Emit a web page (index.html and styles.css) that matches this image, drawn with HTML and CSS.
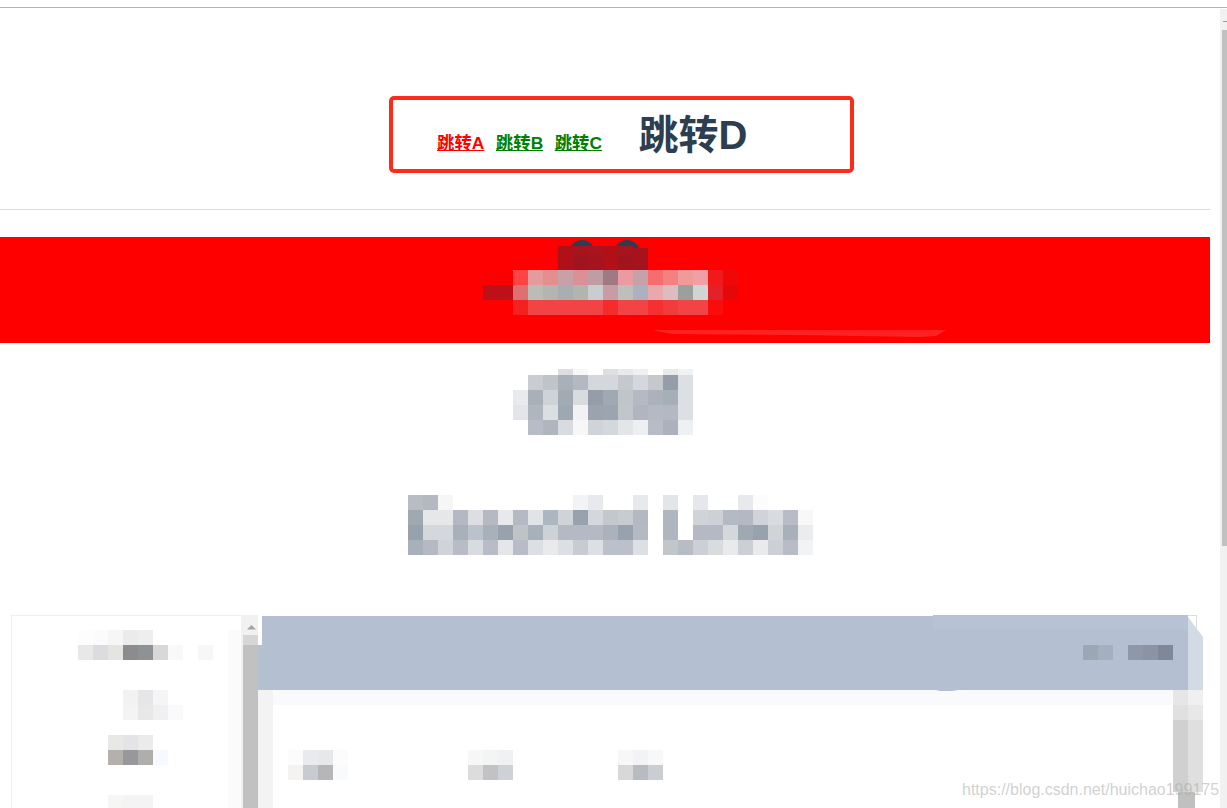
FILE: index.html
```html
<!DOCTYPE html>
<html lang="zh">
<head>
<meta charset="utf-8">
<title>跳转</title>
<link rel="stylesheet" href="styles.css">
</head>
<body>
<div class="topline"></div>
<header class="masthead">
  <nav class="jump-box">
    <a class="jump jump-red" href="#a">跳转A</a>
    <a class="jump jump-green" href="#b">跳转B</a>
    <a class="jump jump-green" href="#c">跳转C</a>
    <span class="jump-big">跳转D</span>
  </nav>
</header>
<hr class="rule">
<svg class="hero mosaic" viewBox="0 237 1210 106" width="1210" height="106">
  <rect class="full" x="0" y="237" fill="#ff0000" style="width:1210px;height:106px"/>
  <circle cx="582" cy="253" r="13" fill="#2c3e50"/><circle cx="627" cy="253" r="13" fill="#2c3e50"/>
  <rect x="0" y="266" fill="#ff0000" style="width:1210px;height:64px"/>
  <rect x="558" y="246" fill="#b01018" style="width:15px;height:24px"/>
  <rect x="573" y="246" fill="#a8141e" style="width:15px;height:9px"/><rect x="573" y="255" fill="#9e1520" style="width:15px;height:15px"/>
  <rect x="588" y="246" fill="#aa141e" style="width:15px;height:9px"/><rect x="588" y="255" fill="#a5141e" style="width:15px;height:15px"/>
  <rect x="603" y="246" fill="#b01016" style="width:15px;height:24px"/>
  <rect x="618" y="246" fill="#a8141e" style="width:15px;height:9px"/><rect x="618" y="255" fill="#a0141e" style="width:15px;height:15px"/>
  <rect x="633" y="248" fill="#a5141c" style="width:15px;height:22px"/>
  <rect x="483" y="270" fill="#fc0000"/><rect x="498" y="270" fill="#fc0000"/><rect x="513" y="270" fill="#ff4444"/><rect x="528" y="270" fill="#e59a9c"/><rect x="543" y="270" fill="#e48e8e"/><rect x="558" y="270" fill="#c8a0a8"/><rect x="573" y="270" fill="#dd8f96"/><rect x="588" y="270" fill="#bf9da4"/><rect x="603" y="270" fill="#9e7a82"/><rect x="618" y="270" fill="#ea9aa0"/><rect x="633" y="270" fill="#c4a2a8"/><rect x="648" y="270" fill="#f56d6d"/><rect x="663" y="270" fill="#f58080"/><rect x="678" y="270" fill="#f09a9a"/><rect x="693" y="270" fill="#f0a0a4"/><rect x="708" y="270" fill="#f01a1a"/><rect x="723" y="270" fill="#f00808"/>
  <rect x="483" y="285" fill="#be1018"/><rect x="498" y="285" fill="#be1018"/><rect x="513" y="285" fill="#e07070"/><rect x="528" y="285" fill="#bcbcb6"/><rect x="543" y="285" fill="#b4b4b0"/><rect x="558" y="285" fill="#a9aeb0"/><rect x="573" y="285" fill="#b2b4ae"/><rect x="588" y="285" fill="#cacdd0"/><rect x="603" y="285" fill="#c89ca4"/><rect x="618" y="285" fill="#bebfbb"/><rect x="633" y="285" fill="#aeb0c0"/><rect x="648" y="285" fill="#e8a8ac"/><rect x="663" y="285" fill="#dcbcbe"/><rect x="678" y="285" fill="#9ca09c"/><rect x="693" y="285" fill="#d0d4d2"/><rect x="708" y="285" fill="#e42028"/><rect x="723" y="285" fill="#e60808"/>
  <rect x="513" y="300" fill="#f52020"/><rect x="528" y="300" fill="#f24444"/><rect x="543" y="300" fill="#f24444"/><rect x="558" y="300" fill="#f24444"/><rect x="573" y="300" fill="#f24444"/><rect x="588" y="300" fill="#f24444"/><rect x="603" y="300" fill="#f52c2c"/><rect x="618" y="300" fill="#f24444"/><rect x="633" y="300" fill="#f24444"/><rect x="648" y="300" fill="#f53030"/><rect x="663" y="300" fill="#f23c3c"/><rect x="678" y="300" fill="#f24444"/><rect x="693" y="300" fill="#f24444"/><rect x="708" y="300" fill="#f80c0c"/>
  <polygon points="653,330 946,330 936,336 920,337 800,335 672,334" fill="#ff2222"/>
</svg>
<svg class="titles mosaic" viewBox="0 343 1210 272" width="1210" height="272">
  <rect x="558" y="369" fill="#dcdde2" style="height:6px"/><rect x="573" y="369" fill="#f7f7f7" style="height:6px"/><rect x="603" y="369" fill="#dcdfe4" style="height:6px"/><rect x="618" y="369" fill="#e8e9ed" style="height:6px"/><rect x="633" y="369" fill="#eeeff2" style="height:6px"/><rect x="663" y="369" fill="#e8e9ed" style="height:6px"/><rect x="678" y="369" fill="#f0f1f3" style="height:6px"/>
  <rect x="528" y="375" fill="#c9ccd0"/><rect x="543" y="375" fill="#bfc4c8"/><rect x="558" y="375" fill="#a8b0b8"/><rect x="573" y="375" fill="#b4b8c2"/><rect x="588" y="375" fill="#d4d7dc"/><rect x="603" y="375" fill="#d4d7dc"/><rect x="618" y="375" fill="#c5c9ce"/><rect x="633" y="375" fill="#d4d7dd"/><rect x="648" y="375" fill="#c5c9ce"/><rect x="663" y="375" fill="#959ea8"/><rect x="678" y="375" fill="#dcdfe3"/>
  <rect x="513" y="390" fill="#e9eaec"/><rect x="528" y="390" fill="#a8b0b8"/><rect x="543" y="390" fill="#cfd3d7"/><rect x="558" y="390" fill="#a2abb4"/><rect x="573" y="390" fill="#d8dcdf"/><rect x="588" y="390" fill="#949da8"/><rect x="603" y="390" fill="#a0a8b2"/><rect x="618" y="390" fill="#c0c5ca"/><rect x="633" y="390" fill="#b4b9c3"/><rect x="648" y="390" fill="#acb2bc"/><rect x="663" y="390" fill="#a6aeb8"/><rect x="678" y="390" fill="#dce0e4"/>
  <rect x="513" y="405" fill="#e3e5e8"/><rect x="528" y="405" fill="#b0b6be"/><rect x="543" y="405" fill="#dcdfe2"/><rect x="558" y="405" fill="#9ea8b2"/><rect x="573" y="405" fill="#f2f2f4"/><rect x="588" y="405" fill="#9aa3ae"/><rect x="603" y="405" fill="#9ca4af"/><rect x="618" y="405" fill="#c2c6cb"/><rect x="633" y="405" fill="#b0b5bf"/><rect x="648" y="405" fill="#b4b9c3"/><rect x="663" y="405" fill="#b4b8c2"/><rect x="678" y="405" fill="#dcdfe3"/>
  <rect x="528" y="420" fill="#b8bcc6"/><rect x="543" y="420" fill="#b0b6be"/><rect x="558" y="420" fill="#d8dbdf"/><rect x="573" y="420" fill="#f7f7f7"/><rect x="588" y="420" fill="#d0d3d8"/><rect x="603" y="420" fill="#d4d7dc"/><rect x="618" y="420" fill="#e4e5e9"/><rect x="633" y="420" fill="#eeeff2"/><rect x="648" y="420" fill="#b8bcc6"/><rect x="663" y="420" fill="#acb2bc"/><rect x="678" y="420" fill="#eff0f2"/>
  <rect x="408" y="495" fill="#b8bcc4"/><rect x="423" y="495" fill="#b4b8c0"/><rect x="438" y="495" fill="#f6f6f6"/><rect x="573" y="495" fill="#f2f3f5"/><rect x="588" y="495" fill="#e8e9ec"/><rect x="633" y="495" fill="#e8e9ec"/><rect x="663" y="495" fill="#e4e5e9"/><rect x="693" y="495" fill="#e6e7ea"/><rect x="738" y="495" fill="#e8e9ec"/><rect x="753" y="495" fill="#fcfcfc"/>
  <rect x="408" y="510" fill="#a0a8b0"/><rect x="423" y="510" fill="#e6e7e9"/><rect x="438" y="510" fill="#e6e7e9"/><rect x="453" y="510" fill="#b4b8c2"/><rect x="468" y="510" fill="#dcdee2"/><rect x="483" y="510" fill="#b4b9c2"/><rect x="498" y="510" fill="#e8e9eb"/><rect x="513" y="510" fill="#b4b9c3"/><rect x="528" y="510" fill="#e0e4e6"/><rect x="543" y="510" fill="#acb6c0"/><rect x="558" y="510" fill="#d0d4d8"/><rect x="573" y="510" fill="#98a2ae"/><rect x="588" y="510" fill="#d4d8dc"/><rect x="603" y="510" fill="#c4c8cc"/><rect x="618" y="510" fill="#c8cccf"/><rect x="633" y="510" fill="#b4b8c2"/><rect x="663" y="510" fill="#b0b6c0"/><rect x="693" y="510" fill="#d0d4d8"/><rect x="708" y="510" fill="#cdd0d4"/><rect x="723" y="510" fill="#b4bac4"/><rect x="738" y="510" fill="#b4b8c2"/><rect x="753" y="510" fill="#d0d4da"/><rect x="768" y="510" fill="#d8dbdf"/><rect x="783" y="510" fill="#b8bcc6"/><rect x="798" y="510" fill="#f8f8f8"/>
  <rect x="408" y="525" fill="#98a2ae"/><rect x="423" y="525" fill="#d4d7dc"/><rect x="438" y="525" fill="#d4d7dc"/><rect x="453" y="525" fill="#a8b0ba"/><rect x="468" y="525" fill="#bcc2cc"/><rect x="483" y="525" fill="#a8b0ba"/><rect x="498" y="525" fill="#98a2ae"/><rect x="513" y="525" fill="#bcc4c6"/><rect x="528" y="525" fill="#a8b0ba"/><rect x="543" y="525" fill="#ccd2d6"/><rect x="558" y="525" fill="#b4b9c3"/><rect x="573" y="525" fill="#b4b9c3"/><rect x="588" y="525" fill="#b4b9c3"/><rect x="603" y="525" fill="#acb2bc"/><rect x="618" y="525" fill="#98a2ae"/><rect x="633" y="525" fill="#b4b9c3"/><rect x="663" y="525" fill="#b0b6c0"/><rect x="693" y="525" fill="#b4b9c3"/><rect x="708" y="525" fill="#b4b9c3"/><rect x="723" y="525" fill="#d4d8da"/><rect x="738" y="525" fill="#a0a8b2"/><rect x="753" y="525" fill="#98a2ae"/><rect x="768" y="525" fill="#d0d4d6"/><rect x="783" y="525" fill="#a8b0ba"/><rect x="798" y="525" fill="#ebecee"/>
  <rect x="408" y="540" fill="#a8b0ba"/><rect x="423" y="540" fill="#b4b9c2"/><rect x="438" y="540" fill="#d0d4d8"/><rect x="453" y="540" fill="#b8bcc6"/><rect x="468" y="540" fill="#d8dcde"/><rect x="483" y="540" fill="#b8bcc6"/><rect x="498" y="540" fill="#e4e6e9"/><rect x="513" y="540" fill="#b8bcc6"/><rect x="528" y="540" fill="#dce0e4"/><rect x="543" y="540" fill="#e8eaec"/><rect x="558" y="540" fill="#dce0e4"/><rect x="573" y="540" fill="#c8ccd0"/><rect x="588" y="540" fill="#dce0e4"/><rect x="603" y="540" fill="#bcc0ca"/><rect x="618" y="540" fill="#bcc0ca"/><rect x="633" y="540" fill="#dce0e4"/><rect x="663" y="540" fill="#c0c6ca"/><rect x="678" y="540" fill="#b8bcc4"/><rect x="693" y="540" fill="#ccd0d6"/><rect x="708" y="540" fill="#d8dcdf"/><rect x="723" y="540" fill="#e8eaec"/><rect x="738" y="540" fill="#ccd0d6"/><rect x="753" y="540" fill="#e8eaec"/><rect x="768" y="540" fill="#ccd0d6"/><rect x="783" y="540" fill="#b8bcc6"/><rect x="798" y="540" fill="#f2f3f5"/>
</svg>
<section class="panel">
  <aside class="sidebar">
    <svg class="mosaic" viewBox="12 616 229 192" width="229" height="192">
      <rect x="78" y="630" fill="#fdfdfd"/><rect x="93" y="630" fill="#fbfbfb"/><rect x="108" y="630" fill="#f6f6f6"/><rect x="123" y="630" fill="#ebebeb"/><rect x="138" y="630" fill="#eeeeee"/>
      <rect x="78" y="645" fill="#e8e8e8"/><rect x="93" y="645" fill="#dcdce0"/><rect x="108" y="645" fill="#e4e4e0"/><rect x="123" y="645" fill="#8c8c8e"/><rect x="138" y="645" fill="#8f9294"/><rect x="153" y="645" fill="#d8d8d8"/><rect x="168" y="645" fill="#f8f9fb"/><rect x="198" y="645" fill="#f7f7f7"/>
      <rect x="123" y="690" fill="#f2f2f2"/><rect x="138" y="690" fill="#e6e6e8"/><rect x="153" y="690" fill="#f5f5f5"/>
      <rect x="123" y="705" fill="#f4f4f4"/><rect x="138" y="705" fill="#e8e8e8"/><rect x="153" y="705" fill="#f0f0f2"/><rect x="168" y="705" fill="#fafafa"/>
      <rect x="108" y="735" fill="#e8e8e6"/><rect x="123" y="735" fill="#e4e4e6"/><rect x="138" y="735" fill="#ebebeb"/>
      <rect x="108" y="750" fill="#b4b0ac"/><rect x="123" y="750" fill="#98989c"/><rect x="138" y="750" fill="#b0aeaa"/><rect x="153" y="750" fill="#f6faff"/>
      <rect x="108" y="795" fill="#f6f6f4"/><rect x="123" y="795" fill="#f4f4f4"/><rect x="138" y="795" fill="#f4f4f4"/>
      <rect x="228" y="630" fill="#fbfbfb" style="width:13px;height:178px"/>
    </svg>
  </aside>
  <div class="inner-track">
    <svg class="inner-arrow" viewBox="0 0 17 20" width="17" height="20"><polygon points="10.5,10 6,14.5 15,14.5" fill="#a3a3a3"/></svg>
    <div class="inner-thumb-cap"></div>
    <div class="inner-thumb"></div>
  </div>
  <svg class="main mosaic" viewBox="258 615 945 193" width="945" height="193">
    <rect x="262" y="616" fill="#b4c0d2" style="width:926px;height:74px"/>
    <rect x="258" y="645" fill="#b3c0d0" style="width:15px;height:45px"/>
    <rect x="933" y="615" fill="#b7c3d3" style="width:255px;height:15px"/>
    <rect x="1188" y="615" fill="#d8dde6" style="width:9px;height:1px"/>
    <rect x="1196" y="615" fill="#d8dde6" style="width:1px;height:13px"/>
    <polygon points="1188,617 1203,637 1203,690 1188,690" fill="#d2dae6"/>
    <rect x="1083" y="645" fill="#9ca6b4"/><rect x="1098" y="645" fill="#a4b0c0"/><rect x="1128" y="645" fill="#8f98a8"/><rect x="1143" y="645" fill="#8c94a4"/><rect x="1158" y="645" fill="#7e8898"/>
    <rect x="258" y="690" fill="#f3f3f3" style="width:15px;height:118px"/>
    <rect x="273" y="690" fill="#f9fafc" style="width:900px;height:15px"/>
    <polygon points="936,690 958,690 952,691 940,691" fill="#b4c0d2"/>
    <polygon points="957,690 1000,701 1005,702 960,691" fill="#ffffff"/>
    <rect x="1173" y="690" fill="#e6e6e6"/><rect x="1188" y="690" fill="#f0f0f0"/>
    <rect x="1173" y="705" fill="#e0e0e0"/><rect x="1188" y="705" fill="#e8e8e8"/>
    <rect x="1173" y="720" fill="#d0d0d0" style="height:72px"/><rect x="1188" y="720" fill="#dfdfdf" style="height:72px"/>
    <rect x="1178" y="792" fill="#c0c0c0" style="width:17px;height:16px"/>
    <rect x="288" y="750" fill="#fcfcfc"/><rect x="303" y="750" fill="#e8eaec"/><rect x="318" y="750" fill="#e6e8ea"/><rect x="333" y="750" fill="#fcfcfd"/>
    <rect x="288" y="765" fill="#f4f3f1"/><rect x="303" y="765" fill="#c8ccd2"/><rect x="318" y="765" fill="#b6b6b8"/><rect x="333" y="765" fill="#f9fafc"/>
    <rect x="468" y="750" fill="#f7f7f7"/><rect x="483" y="750" fill="#f3f4f4"/><rect x="498" y="750" fill="#f0f1f3"/>
    <rect x="468" y="765" fill="#dcdcdc"/><rect x="483" y="765" fill="#c2c2c6"/><rect x="498" y="765" fill="#ced2d6"/>
    <rect x="618" y="750" fill="#f7f7f7"/><rect x="633" y="750" fill="#f2f3f5"/><rect x="648" y="750" fill="#f9f8f8"/>
    <rect x="618" y="765" fill="#d8d8d8"/><rect x="633" y="765" fill="#b8bcc0"/><rect x="648" y="765" fill="#cacdd2"/>
  </svg>
</section>
<div class="page-scroll">
  <svg class="page-arrow" viewBox="0 0 7 21" width="7" height="21"><rect x="3" y="12" width="4" height="1" fill="#9a9a9a"/></svg>
  <div class="page-thumb"></div>
</div>
<div class="watermark">https://blog.csdn.net/huichao199175</div>
</body>
</html>
```
FILE: styles.css
```css
* { box-sizing: border-box; }
html, body { margin: 0; height: 808px; overflow: hidden; background: #fff; }
body { position: relative; font-family: "Liberation Sans", "Noto Sans CJK SC", sans-serif; }
.topline { height: 1px; margin-top: 7px; background: #b4b4b4; }
.masthead { width: 1210px; padding-top: 88px; padding-bottom: 36px; display: flex; justify-content: flex-start; }
.jump-box {
  margin-left: 389px; width: 465px; height: 77px;
  border: 4px solid #ff2a1a; border-radius: 5px;
  display: flex; align-items: baseline; padding: 3px 0 0 44px;
}
.jump { font-size: 17.4px; font-weight: 700; margin-right: 11.5px; }
.jump-red { color: #ff0000; }
.jump-green { color: #008000; }
.jump-big { font-size: 40px; font-weight: 700; color: #2c3e50; margin-left: 25px; }
.rule { width: 1210px; height: 1px; margin: 0 0 27px; border: 0; background: #dddddd; }
.mosaic { display: block; shape-rendering: crispEdges; }
.mosaic rect { width: 15px; height: 15px; }
.mosaic circle, .mosaic polygon { shape-rendering: geometricPrecision; }
.panel { display: flex; margin-left: 11px; width: 1192px; height: 193px; }
.sidebar { width: 230px; border-left: 1px solid #eeeeee; border-top: 1px solid #eeeeee; flex: none; }
.inner-track { width: 17px; flex: none; background: #f1f1f1; display: flex; flex-direction: column; align-items: flex-end; }
.inner-arrow { display: block; flex: none; }
.inner-thumb-cap { width: 15px; height: 10px; background: #d6d6d6; flex: none; }
.inner-thumb { width: 15px; flex: 1; background: #c1c1c1; }
.main { flex: none; }
.page-scroll { position: absolute; top: 9px; right: 0; bottom: 0; width: 7px; background: #f1f1f1; }
.page-arrow { display: block; }
.page-thumb { margin-left: 2px; width: 5px; height: 516px; background: #c1c1c1; }
.watermark { position: absolute; left: 962px; top: 780px; font-size: 16px; line-height: 20px; color: rgba(170,170,170,.55); white-space: nowrap; }
```
